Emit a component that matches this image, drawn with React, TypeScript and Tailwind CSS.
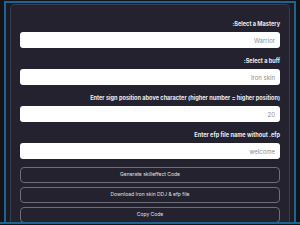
const fields = [
  { label: 'Select a Mastery:', value: 'Warrior' },
  { label: 'Select a buff:', value: 'Iron skin' },
  { label: 'Enter sign position above character (higher number = higher position)', value: '20' },
  { label: 'Enter efp file name without .efp', value: 'welcome' },
];

const buttons = ['Generate skilleffect Code', 'Download Iron skin DDJ & efp file', 'Copy Code'];

export default function App() {
  return (
    <div
      className="w-[300px] h-[225px] flex flex-col overflow-hidden bg-[#12131b]"
      style={{ fontFamily: 'Inter, "Noto Sans", sans-serif' }}
    >
      {/* outer frame */}
      <div className="flex-1 min-h-0 mt-[1px] mx-[4px] border-x-2 border-t-2 border-[#1e6490] bg-[#1c1b25] px-[4px] pt-[1px] overflow-hidden">
        {/* card */}
        <div className="h-full rounded-t-[5px] border-x border-t border-[#3a3c4a] bg-[#23222e] px-[9px] pt-[15px]">
          <div className="flex flex-col gap-[9px]">
            {fields.map((f) => (
              <div key={f.label} className="flex flex-col gap-[4px]">
                <label dir="rtl" className="text-right text-[5.6px] leading-[8px] font-bold text-[#ececf0]">
                  {f.label}
                </label>
                <div className="h-[16px] rounded-[3px] bg-white flex items-center justify-end pr-[5px] text-[6px] text-[#8c8c8c]">
                  {f.value}
                </div>
              </div>
            ))}
          </div>
          <div className="mt-[8px] flex flex-col gap-[4px]">
            {buttons.map((b) => (
              <button
                key={b}
                className="h-[16px] w-full rounded-[4px] border border-[#6c6e7b] bg-transparent flex items-center justify-center text-[5px] text-[#e2e2e6]"
              >
                {b}
              </button>
            ))}
          </div>
        </div>
      </div>
      <div className="h-[2px] bg-[#1e6490]" />
      <div className="h-[1px] bg-[#12131b]" />
    </div>
  );
}
